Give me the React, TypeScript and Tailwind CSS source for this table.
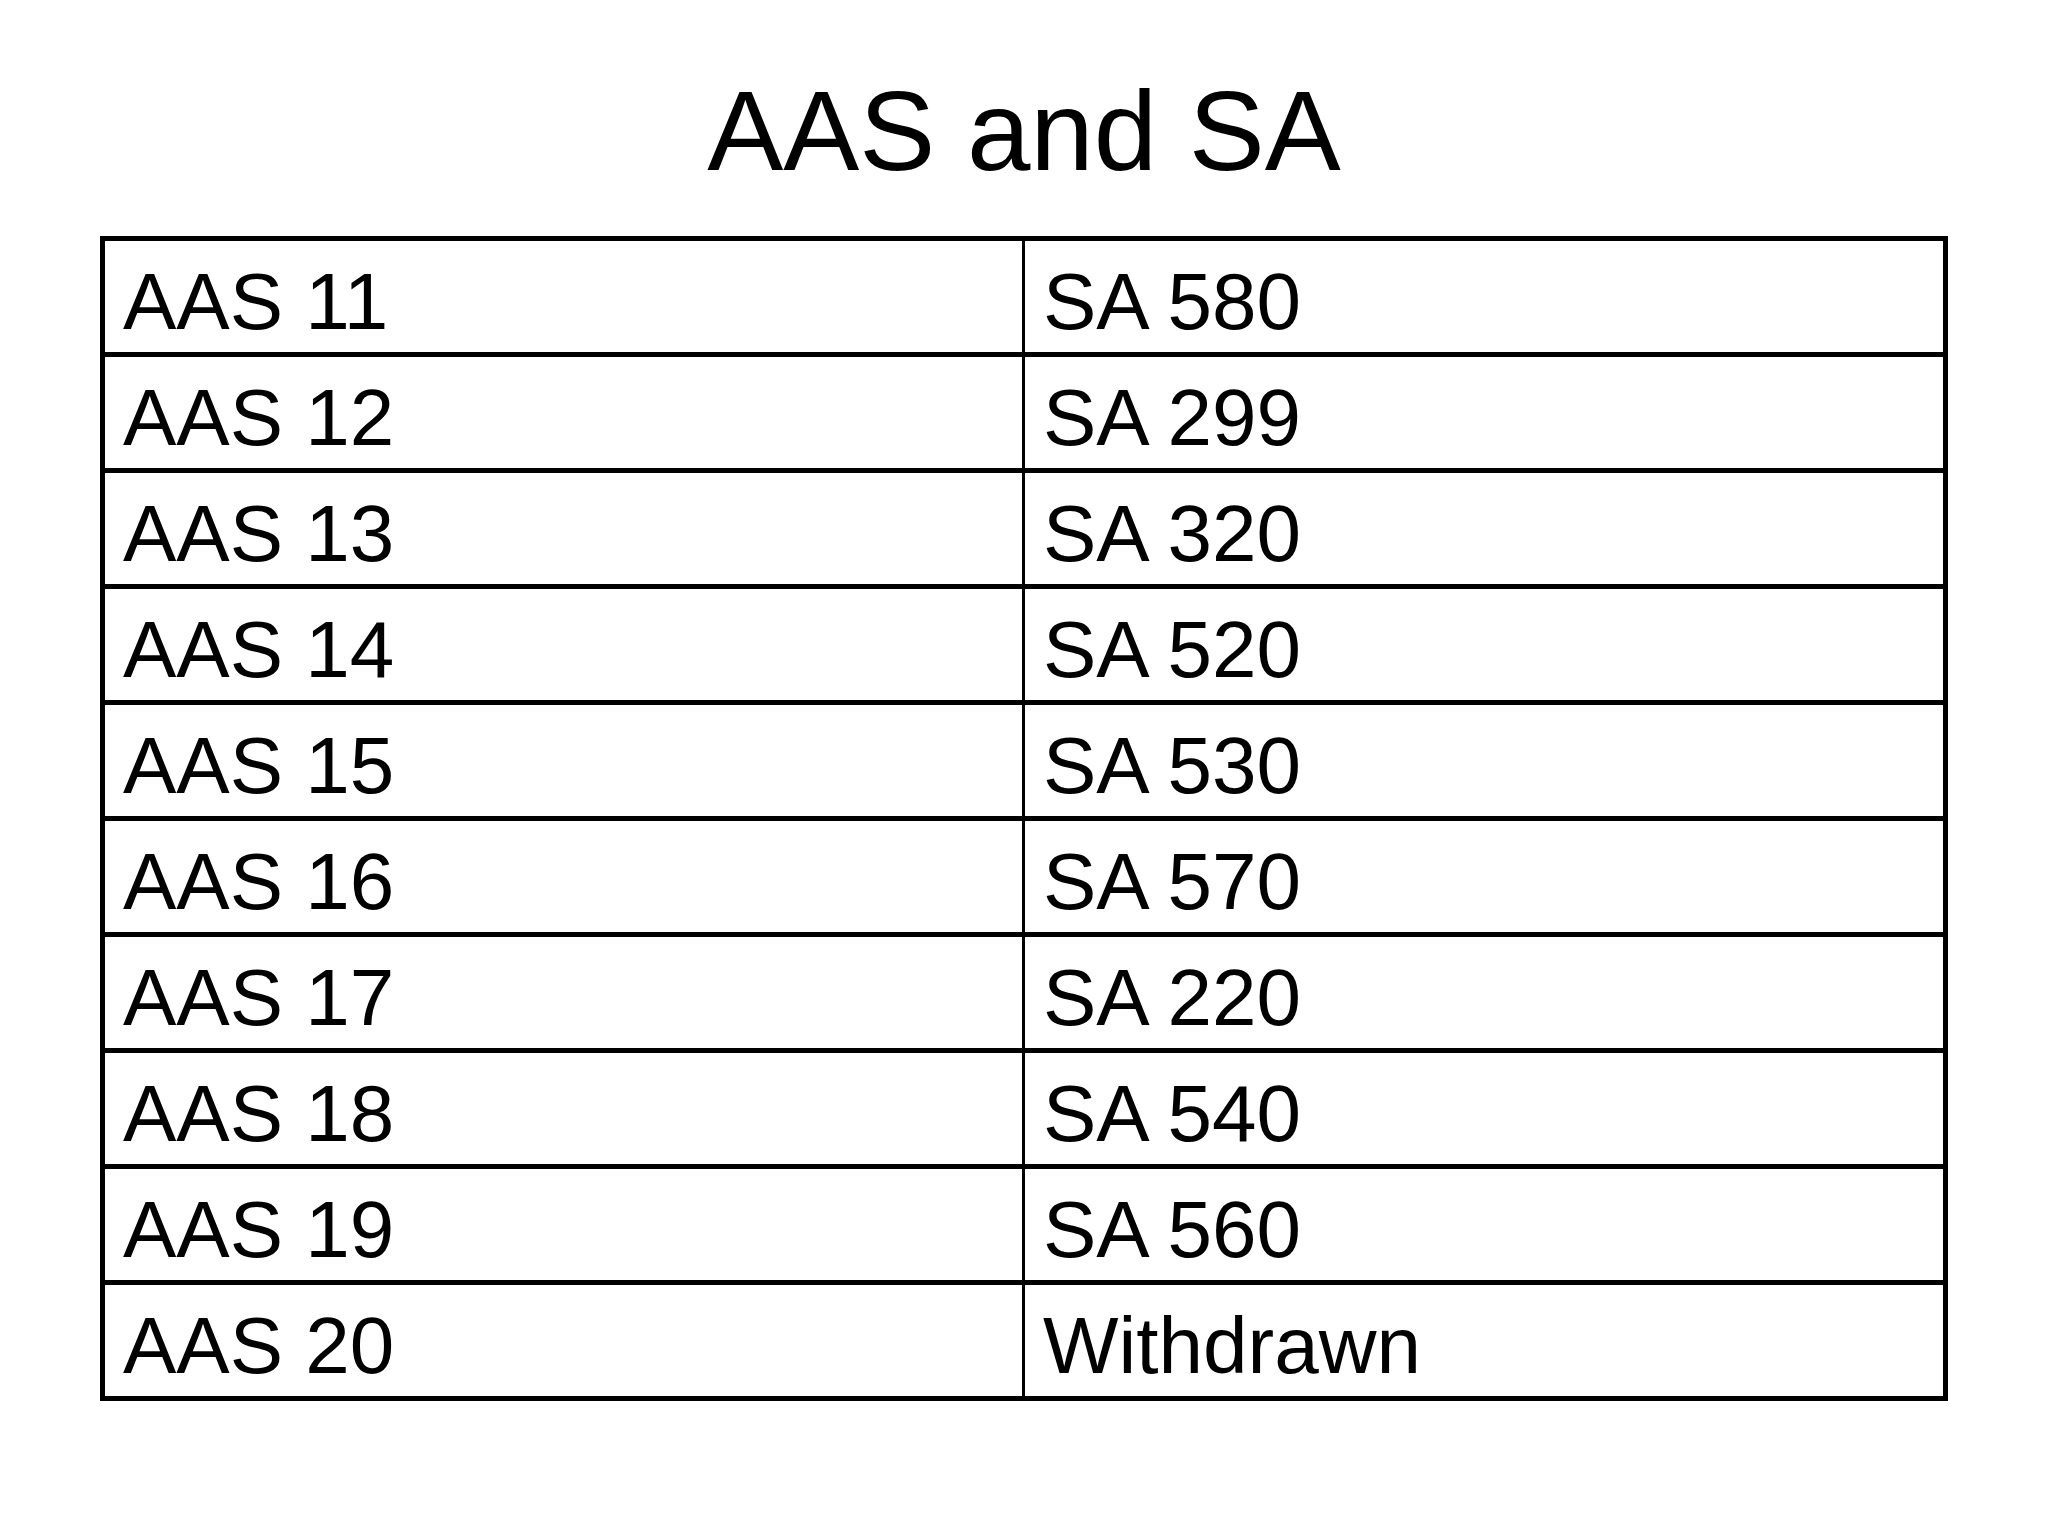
import React from "react";

const rows: [string, string][] = [
  ["AAS 11", "SA 580"],
  ["AAS 12", "SA 299"],
  ["AAS 13", "SA 320"],
  ["AAS 14", "SA 520"],
  ["AAS 15", "SA 530"],
  ["AAS 16", "SA 570"],
  ["AAS 17", "SA 220"],
  ["AAS 18", "SA 540"],
  ["AAS 19", "SA 560"],
  ["AAS 20", "Withdrawn"],
];

export default function App() {
  return (
    <div
      className="w-[2048px] h-[1536px] bg-white text-black flex flex-col items-center"
      style={{ fontFamily: '"Liberation Sans", Arial, sans-serif' }}
    >
      <h1 className="pt-[74px] text-[114px] leading-[114px] font-normal">AAS and SA</h1>

      <div className="mt-[48px] w-[1848px] border-[5px] border-black">
        {rows.map(([left, right], i) => (
          <div
            key={left}
            className={
              i < rows.length - 1 ? "flex h-[116px] border-b-[5px] border-black" : "flex h-[111px]"
            }
          >
            <div className="w-[920px] border-r-[3px] border-black pl-[18px] pt-[21px] text-[80px] leading-[80px]">
              {left}
            </div>
            <div className="flex-1 pl-[18px] pt-[21px] text-[80px] leading-[80px]">{right}</div>
          </div>
        ))}
      </div>
    </div>
  );
}
